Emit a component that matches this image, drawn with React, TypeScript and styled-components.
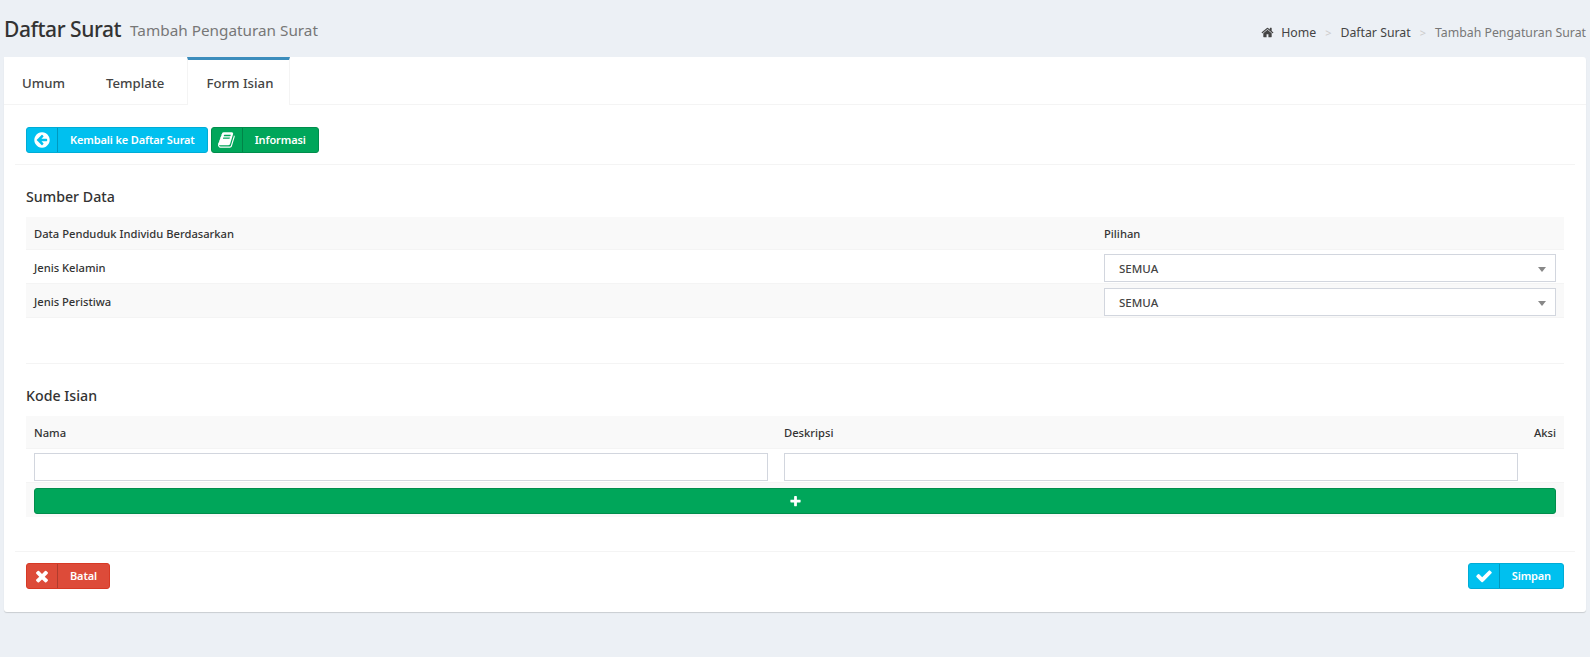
import styled, { createGlobalStyle } from 'styled-components'

const GlobalStyle = createGlobalStyle`
  html, body {
    margin: 0;
    background: #ecf0f5;
    font-family: "Noto Sans", "Open Sans", sans-serif;
    color: #333;
  }
  * { box-sizing: border-box; }
`

// Font Awesome 4 glyphs, the v5 set in react-icons has a different book and home
const glyphs = {
  home: 'M1472 992v480q0 26-19 45t-45 19h-384v-384h-256v384h-384q-26 0-45-19t-19-45v-480q0-1 .5-3t.5-3l575-474 575 474q1 2 1 6zm223-69l-62 74q-8 9-21 11h-3q-13 0-21-7l-692-577-692 577q-12 8-24 7-13-2-21-11l-62-74q-8-10-7-23.5t11-21.5l719-599q32-26 76-26t76 26l244 204v-195q0-14 9-23t23-9h192q14 0 23 9t9 23v408l219 182q10 8 11 21.5t-7 23.5z',
  back: 'M1408 960v-128q0-26-19-45t-45-19h-502l189-189q19-19 19-45t-19-45l-91-91q-18-18-45-18t-45 18l-362 362-91 91q-18 18-18 45t18 45l91 91 362 362q18 18 45 18t45-18l91-91q18-18 18-45t-18-45l-189-189h502q26 0 45-19t19-45zm256-64q0 209-103 385.5t-279.5 279.5-385.5 103-385.5-103-279.5-279.5-103-385.5 103-385.5 279.5-279.5 385.5-103 385.5 103 279.5 279.5 103 385.5z',
  book: 'M1639 478q40 57 18 129l-275 906q-19 64-76.5 107.5t-122.5 43.5h-923q-77 0-148.5-53.5t-99.5-131.5q-24-67-2-127 0-4 3-27t4-37q1-8-3-21.5t-3-19.5q2-11 8-21t16.5-23.5 16.5-23.5q23-38 45-91.5t30-91.5q3-10 .5-30t-.5-28q3-11 17-28t17-23q21-36 42-92t25-90q1-9-2.5-32t.5-28q4-13 22-30.5t22-22.5q19-26 42.5-84.5t27.5-96.5q1-8-3-25.5t-2-26.5q2-8 9-18t18-23 17-21q8-12 16.5-30.5t15-35 16-36 19.5-32 26.5-23.5 36-11.5 47.5 5.5l-1 3q38-9 51-9h761q74 0 114 56t18 130l-274 906q-36 119-71.5 153.5t-128.5 34.5h-869q-27 0-38 15-11 16-1 43 24 70 144 70h923q29 0 56-15.5t35-41.5l300-987q7-22 5-57 38 15 59 43zm-1064 2q-4 13 2 22.5t20 9.5h608q13 0 25.5-9.5t16.5-22.5l21-64q4-13-2-22.5t-20-9.5h-608q-13 0-25.5 9.5t-16.5 22.5zm-83 256q-4 13 2 22.5t20 9.5h608q13 0 25.5-9.5t16.5-22.5l21-64q4-13-2-22.5t-20-9.5h-608q-13 0-25.5 9.5t-16.5 22.5z',
  times: 'M1490 1322q0 40-28 68l-136 136q-28 28-68 28t-68-28l-294-294-294 294q-28 28-68 28t-68-28l-136-136q-28-28-28-68t28-68l294-294-294-294q-28-28-28-68t28-68l136-136q28-28 68-28t68 28l294 294 294-294q28-28 68-28t68 28l136 136q28 28 28 68t-28 68l-294 294 294 294q28 28 28 68z',
  check: 'M1671 566q0 40-28 68l-724 724-136 136q-28 28-68 28t-68-28l-136-136-362-362q-28-28-28-68t28-68l136-136q28-28 68-28t68 28l294 295 656-657q28-28 68-28t68 28l136 136q28 28 28 68z',
  plus: 'M1600 736v192q0 40-28 68t-68 28h-416v416q0 40-28 68t-68 28h-192q-40 0-68-28t-28-68v-416h-416q-40 0-68-28t-28-68v-192q0-40 28-68t68-28h416v-416q0-40 28-68t68-28h192q40 0 68 28t28 68v416h416q40 0 68 28t28 68z',
}

function Fa({ name }: { name: keyof typeof glyphs }) {
  return (
    <svg viewBox="0 0 1792 1792" width="1em" height="1em" fill="currentColor">
      <path d={glyphs[name]} />
    </svg>
  )
}

const Page = styled.div`
  height: 657px;
  padding: 0 4px;
`

// Page header
const Header = styled.header`
  height: 57px;
  display: flex;
  justify-content: space-between;
  padding: 14px 0 0;
`
const Title = styled.h1`
  margin: 0;
  font-size: 21px;
  line-height: 30px;
  font-weight: 500;
  letter-spacing: -0.45px;
  color: #333;
  small {
    margin-left: 9px;
    font-size: 15.3px;
    font-weight: 400;
    letter-spacing: 0;
    color: #777;
    position: relative;
    top: -1px;
  }
`
const Crumbs = styled.ol`
  display: flex;
  align-items: center;
  height: 20px;
  margin: 8px 0 0;
  padding: 0;
  list-style: none;
  font-size: 12.3px;
  color: #444;
`
const Crumb = styled.li<{ $muted?: boolean }>`
  display: flex;
  align-items: center;
  color: ${(p) => (p.$muted ? '#777' : '#444')};
  svg {
    margin-right: 7px;
    font-size: 13px;
  }
  &:not(:first-child)::before {
    content: '>';
    margin: 0 9px;
    color: #ccc;
    font-size: 11px;
  }
`

// Card and tabs
const Card = styled.main`
  height: 555px;
  background: #fff;
  border-radius: 3px;
  box-shadow: 0 1px 1px rgba(0, 0, 0, 0.15);
`
const Tabs = styled.nav`
  display: flex;
  height: 48px;
  border-bottom: 1px solid #f4f4f4;
`
const Tab = styled.a<{ $active?: boolean }>`
  display: flex;
  align-items: center;
  height: ${(p) => (p.$active ? '48px' : '47px')};
  margin-right: 5px;
  padding: 1px ${(p) => (p.$active ? '16px' : '18px')} 0 18px;
  font-size: 13.2px;
  font-weight: 500;
  color: #444;
  background: #fff;
  border-top: 3px solid ${(p) => (p.$active ? '#3c8dbc' : 'transparent')};
  ${(p) => p.$active && 'border-left: 1px solid #f4f4f4; border-right: 1px solid #f4f4f4;'}
`

// Sections
const Toolbar = styled.div`
  display: flex;
  gap: 3px;
  height: 60px;
  margin: 0 11px;
  padding: 22px 11px 0;
  border-bottom: 1px solid #f4f4f4;
`
const Body = styled.section`
  padding: 19px 22px 0;
`
const SectionTitle = styled.h3`
  margin: 0;
  height: 33px;
  font-size: 14.2px;
  line-height: 26px;
  font-weight: 500;
  color: #333;
`
const Rule = styled.hr`
  margin: 45px 0 19px;
  border: 0;
  border-top: 1px solid #f4f4f4;
`
const Row = styled.div<{ $striped?: boolean; $cols: string; $height: number }>`
  display: grid;
  grid-template-columns: ${(p) => p.$cols};
  align-items: center;
  height: ${(p) => p.$height}px;
  padding: ${(p) => (p.$height > 33 ? '2px' : '0')} 8px 0;
  background: ${(p) => (p.$striped ? '#f9f9f9' : '#fff')};
  border-bottom: 1px solid #f4f4f4;
  font-size: 11.2px;
  font-weight: 500;
  color: #333;
`
const Right = styled.span`
  text-align: right;
`
const SelectBox = styled.div`
  position: relative;
  align-self: end;
  height: 28px;
  margin-bottom: 1px;
  padding-left: 14px;
  display: flex;
  align-items: center;
  background: #fff;
  border: 1px solid #d2d6de;
  font-size: 11.5px;
  font-weight: 500;
  color: #444;
  &::after {
    content: '';
    position: absolute;
    right: 9px;
    top: 12px;
    border-style: solid;
    border-width: 5px 4.5px 0;
    border-color: #888 transparent transparent;
  }
`
const Input = styled.input`
  display: block;
  align-self: end;
  width: 100%;
  height: 28px;
  margin-bottom: 1px;
  border: 1px solid #d2d6de;
  background: #fff;
`
const AddRow = styled.div`
  height: 34px;
  padding: 5px 8px 0;
  background: #f9f9f9;
`
const AddButton = styled.button`
  display: flex;
  align-items: center;
  justify-content: center;
  width: 100%;
  height: 26px;
  padding: 0;
  background: #00a65a;
  border: 1px solid #008d4c;
  border-radius: 3px;
  color: #fff;
  font-size: 13px;
`
const Footer = styled.footer`
  display: flex;
  justify-content: space-between;
  height: 61px;
  margin: 34px 11px 0;
  padding: 11px 11px 0;
  border-top: 1px solid #f4f4f4;
`

const palette = {
  info: ['#00c0ef', '#00acd6'],
  success: ['#00a65a', '#008d4c'],
  danger: ['#dd4b39', '#d73925'],
}

const SocialButton = styled.button<{ $tone: keyof typeof palette }>`
  display: flex;
  align-items: stretch;
  height: 26px;
  padding: 0 12px 0 0;
  background: ${(p) => palette[p.$tone][0]};
  border: 1px solid ${(p) => palette[p.$tone][1]};
  border-radius: 3px;
  color: #fff;
  font-family: inherit;
  font-size: 11px;
  font-weight: 600;
  letter-spacing: -0.14px;
  line-height: 24px;
`
const IconCell = styled.span`
  display: flex;
  align-items: center;
  justify-content: center;
  width: 31px;
  margin-right: 12px;
  font-size: 18px;
  border-right: 1px solid rgba(0, 0, 0, 0.2);
`

const sourceCols = '1070px 1fr'
const fieldCols = '734px 16px 734px 1fr'

export default function App() {
  return (
    <Page>
      <GlobalStyle />
      <Header>
        <Title>
          Daftar Surat<small>Tambah Pengaturan Surat</small>
        </Title>
        <Crumbs>
          <Crumb>
            <Fa name="home" />
            Home
          </Crumb>
          <Crumb>Daftar Surat</Crumb>
          <Crumb $muted>Tambah Pengaturan Surat</Crumb>
        </Crumbs>
      </Header>
      <Card>
        <Tabs>
          <Tab>Umum</Tab>
          <Tab>Template</Tab>
          <Tab $active>Form Isian</Tab>
        </Tabs>
        <Toolbar>
          <SocialButton $tone="info">
            <IconCell>
              <Fa name="back" />
            </IconCell>
            Kembali ke Daftar Surat
          </SocialButton>
          <SocialButton $tone="success">
            <IconCell>
              <Fa name="book" />
            </IconCell>
            Informasi
          </SocialButton>
        </Toolbar>
        <Body>
          <SectionTitle>Sumber Data</SectionTitle>
          <Row $striped $cols={sourceCols} $height={33}>
            <span>Data Penduduk Individu Berdasarkan</span>
            <span>Pilihan</span>
          </Row>
          <Row $cols={sourceCols} $height={34}>
            <span>Jenis Kelamin</span>
            <SelectBox>SEMUA</SelectBox>
          </Row>
          <Row $striped $cols={sourceCols} $height={34}>
            <span>Jenis Peristiwa</span>
            <SelectBox>SEMUA</SelectBox>
          </Row>
          <Rule />
          <SectionTitle>Kode Isian</SectionTitle>
          <Row $striped $cols={fieldCols} $height={33}>
            <span>Nama</span>
            <span />
            <span>Deskripsi</span>
            <Right>Aksi</Right>
          </Row>
          <Row $cols={fieldCols} $height={34}>
            <Input />
            <span />
            <Input />
            <span />
          </Row>
          <AddRow>
            <AddButton>
              <Fa name="plus" />
            </AddButton>
          </AddRow>
        </Body>
        <Footer>
          <SocialButton $tone="danger">
            <IconCell>
              <Fa name="times" />
            </IconCell>
            Batal
          </SocialButton>
          <SocialButton $tone="info">
            <IconCell>
              <Fa name="check" />
            </IconCell>
            Simpan
          </SocialButton>
        </Footer>
      </Card>
    </Page>
  )
}
